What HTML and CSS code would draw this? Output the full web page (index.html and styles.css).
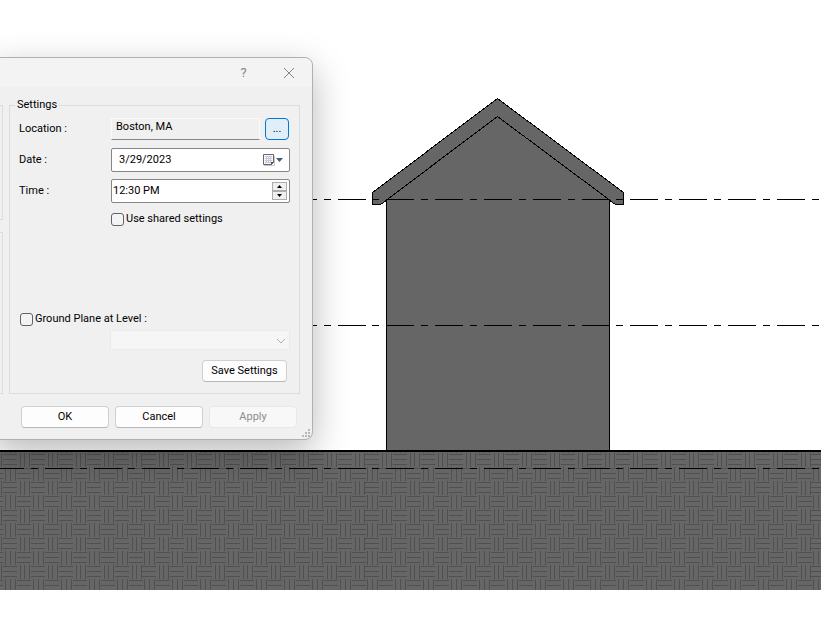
FILE: index.html
```html
<!DOCTYPE html>
<html lang="en">
<head>
    <meta charset="UTF-8">
    <meta name="viewport" content="width=device-width, initial-scale=1.0">
    <title>Sun Settings</title>
    <link rel="stylesheet" href="styles.css">
</head>
<body>
    <main class="workspace">
        <svg class="elevation" shape-rendering="crispEdges" aria-hidden="true">
            <defs>
                <!-- one basket weave block, repeated across the tile -->
                <g id="weave" fill="#505050">
                    <path d="M3 4h14v1h-14z M3 9h14v1h-14z M3 14h14v1h-14z"/>
                    <path d="M20 3h1v14h-1z M24 3h1v14h-1z M29 3h1v14h-1z"/>
                    <path d="M17 18h14v1h-14z M17 23h14v1h-14z M17 28h14v1h-14z"/>
                    <path d="M5 17h1v14h-1z M10 17h1v14h-1z M15 17h1v14h-1z"/>
                </g>
                <pattern id="earth" x="0" y="450" width="223" height="28" patternUnits="userSpaceOnUse">
                    <rect width="223" height="28" fill="#666"/>
                    <g id="strip">
                        <use href="#weave" x="-28"/>
                        <use href="#weave"/>
                        <use href="#weave" x="28"/>
                        <use href="#weave" x="56"/>
                        <use href="#weave" x="84"/>
                        <use href="#weave" x="112"/>
                        <use href="#weave" x="139"/>
                        <use href="#weave" x="167"/>
                        <use href="#weave" x="195"/>
                    </g>
                    <use href="#strip" y="-28"/>
                </pattern>
            </defs>

            <!-- ground -->
            <rect x="0" y="451" width="100%" height="139" fill="url(#earth)"/>
            <rect x="0" y="450" width="100%" height="2" fill="#000"/>

            <!-- house -->
            <rect x="386" y="199" width="224" height="251" fill="#666"/>
            <path d="M386.5 200V450 M609.5 200V450" stroke="#000"/>
            <path d="M372.5 192.500L497.500 98.500L623.500 192.500V204.500H615.500L609.500 200.500H386.500L380.500 204.500H372.500Z" fill="#666"/>
            <path d="M386.500 200.500L380.500 204.500H372.500V192.500L497.500 98.500L623.500 192.500V204.500H615.500L609.500 200.500" fill="none" stroke="#000"/>
            <path d="M384.500 201.500L497.500 116.500L611.500 201.500" fill="none" stroke="#000"/>

            <!-- levels -->
            <g class="level">
                <line x1="-4" y1="199.500" x2="100%" y2="199.500"/>
                <line x1="-4" y1="325.500" x2="100%" y2="325.500"/>
                <line x1="-4" y1="468.500" x2="100%" y2="468.500"/>
            </g>
        </svg>

        <form class="dialog">
            <header class="titlebar">
                <button type="button" class="title-btn" aria-label="Help">?</button>
                <button type="button" class="title-btn" aria-label="Close">
                    <svg width="12" height="12" viewBox="0 0 12 12"><path d="M1 1L11 11M11 1L1 11" stroke="#858585" fill="none"/></svg>
                </button>
            </header>

            <div class="content">
                <div class="side">
                    <div class="side-box side-top"></div>
                    <div class="side-box side-bottom"></div>
                </div>

                <fieldset class="group">
                    <legend>Settings</legend>
                    <div class="row">
                        <label for="location">Location :</label>
                        <input type="text" id="location" class="location" value="Boston, MA" readonly>
                        <button type="button" class="btn browse">...</button>
                    </div>
                    <div class="row">
                        <label for="date">Date :</label>
                        <div class="field date">
                            <input type="text" id="date" value="3/29/2023">
                            <button type="button" class="calendar" aria-label="Choose date">
                                <svg width="22" height="14" viewBox="0 0 22 14">
                                    <path d="M1 12.500H11.500V3" stroke="#c9c4c4" fill="none"/>
                                    <path d="M.5 1.500H10.500V9.500L8.500 11.500H.5Z" fill="#f4f6fa" stroke="#6f6363"/>
                                    <path d="M2 3.500H9M2 5.500H9M2 7.500H9M2 9.500H8M3.500 3V10M5.500 3V10M7.500 3V10" stroke="#c3cbd9" fill="none"/>
                                    <path d="M8 12V9H11Z" fill="#5b5152"/>
                                    <path d="M13 5H20L16.500 9Z" fill="#435a86"/>
                                </svg>
                            </button>
                        </div>
                    </div>
                    <div class="row">
                        <label for="time">Time :</label>
                        <div class="field time">
                            <input type="text" id="time" value="12:30 PM">
                            <div class="spinner">
                                <button type="button" aria-label="Later"><svg width="5" height="3" viewBox="0 0 5 3"><path d="M0 3L2.500 0L5 3Z"/></svg></button>
                                <button type="button" aria-label="Earlier"><svg width="5" height="3" viewBox="0 0 5 3"><path d="M0 0L2.500 3L5 0Z"/></svg></button>
                            </div>
                        </div>
                    </div>
                    <div class="check shared">
                        <input type="checkbox" id="shared">
                        <label for="shared">Use shared settings</label>
                    </div>
                    <div class="check ground">
                        <input type="checkbox" id="ground">
                        <label for="ground">Ground Plane at Level :</label>
                    </div>
                    <div class="level-select">
                        <select aria-label="Level" disabled><option></option></select>
                        <svg width="10" height="6" viewBox="0 0 10 6"><path d="M1 1L5 5L9 1" stroke="#b0b0b0" fill="none"/></svg>
                    </div>
                    <button type="button" class="btn save">Save Settings</button>
                </fieldset>
            </div>

            <footer class="actions">
                <button type="submit" class="btn">OK</button>
                <button type="button" class="btn">Cancel</button>
                <button type="button" class="btn" disabled>Apply</button>
            </footer>

            <svg class="grip" width="9" height="9" viewBox="0 0 9 9" fill="#b8b8b8">
                <path d="M6 0h2v2h-2z M3 3h2v2h-2z M6 3h2v2h-2z M0 6h2v2h-2z M3 6h2v2h-2z M6 6h2v2h-2z"/>
            </svg>
        </form>
    </main>
</body>
</html>
```
FILE: styles.css
```css
* {
    box-sizing: border-box;
}
body {
    margin: 0;
    background: #fff;
    font-family: Roboto, Tahoma, sans-serif;
    font-size: 11px;
    line-height: 14px;
    color: #000;
}
input, button, select {
    font: inherit;
    color: inherit;
    margin: 0;
    padding: 0;
}
.workspace {
    position: relative;
    min-height: 100vh;
    overflow: hidden;
}
.elevation {
    position: absolute;
    width: 100%;
    height: 100%;
}
.level {
    stroke: #000;
    stroke-dasharray: 28 6.8 7 7;
}

/* dialog window, partly off the left edge */
.dialog {
    position: absolute;
    left: -8px;
    top: 57px;
    width: 321px;
    background: #f0f0f0;
    border: 1px solid #b0b0b0;
    border-radius: 8px;
    box-shadow: 0 12px 36px rgba(0, 0, 0, 0.28);
}
.titlebar {
    display: flex;
    justify-content: flex-end;
    height: 29px;
    padding-right: 1px;
    background: #f3f3f3;
    border-radius: 8px 8px 0 0;
}
.title-btn {
    display: flex;
    align-items: center;
    justify-content: center;
    width: 45px;
    border: none;
    background: none;
    color: #858585;
    font-size: 13px;
}
.content {
    display: flex;
    gap: 6px;
    padding: 11px 12px 0 0;
}
.side {
    display: flex;
    flex-direction: column;
    gap: 12px;
    width: 10px;
    padding-top: 7px;
}
.side-box {
    border: 1px solid #dcdcdc;
}
.side-top {
    height: 115px;
}
.side-bottom {
    flex: 1;
}
.group {
    flex: 1;
    display: flex;
    flex-direction: column;
    min-width: 0;
    margin: 0;
    padding: 5px 9px 11px;
    border: 1px solid #dcdcdc;
}
legend {
    margin-left: -4px;
    padding: 0 2px;
}
.row {
    display: flex;
    align-items: center;
    height: 23px;
    margin-bottom: 8px;
}
.row label {
    flex: none;
    width: 92px;
}
.location {
    flex: 1;
    min-width: 0;
    height: 22px;
    margin-right: 5px;
    padding: 0 4px 4px;
    border: 1px solid #fafafa;
    border-bottom-color: #868686;
    background: #f0f0f0;
}
.btn {
    height: 22px;
    border: 1px solid #d0d0d0;
    border-bottom-color: #b8b8b8;
    border-radius: 4px;
    background: #fdfdfd;
}
.btn:disabled {
    border-color: #e8e8e8;
    background: #f8f8f8;
    color: #8c8c8c;
}
.browse {
    width: 24px;
    margin-right: 1px;
    border-color: #0078d4;
    background: #e0eef9;
}
.field {
    flex: 1;
    display: flex;
    align-items: center;
    min-width: 0;
    height: 24px;
    border: 1px solid #868686;
    border-radius: 2px;
    background: #fff;
}
.field input {
    flex: 1;
    min-width: 0;
    border: none;
    background: none;
    outline: none;
}
.date {
    padding: 0 4px 0 7px;
}
.time {
    padding: 0 2px 0 1px;
}
.calendar {
    display: flex;
    border: none;
    background: none;
}
.spinner {
    display: flex;
    flex-direction: column;
}
.spinner button {
    display: flex;
    align-items: center;
    justify-content: center;
    width: 15px;
    height: 9px;
    border: 1px solid #adadad;
    background: #f0f0f0;
}
.check {
    display: flex;
    align-items: center;
    gap: 2px;
    height: 14px;
}
.check input {
    appearance: none;
    width: 13px;
    height: 13px;
    border: 1px solid #626262;
    border-radius: 3px;
    background: #f3f3f3;
}
.shared {
    margin: 2px 0 86px 92px;
}
.ground {
    margin-left: 1px;
}
.level-select {
    display: flex;
    position: relative;
    margin: 4px 0 10px 91px;
}
.level-select select {
    appearance: none;
    width: 100%;
    height: 20px;
    border: 1px solid #e8e8e8;
    border-radius: 2px;
    background: #f9f9f9;
}
.level-select svg {
    position: absolute;
    right: 4px;
    top: 8px;
}
.save {
    align-self: flex-end;
    width: 85px;
    margin-right: 3px;
}
.actions {
    display: flex;
    justify-content: flex-end;
    gap: 6px;
    padding: 12px 15px 11px 0;
}
.actions .btn {
    width: 88px;
}
.grip {
    position: absolute;
    right: 1px;
    bottom: 1px;
}
```
